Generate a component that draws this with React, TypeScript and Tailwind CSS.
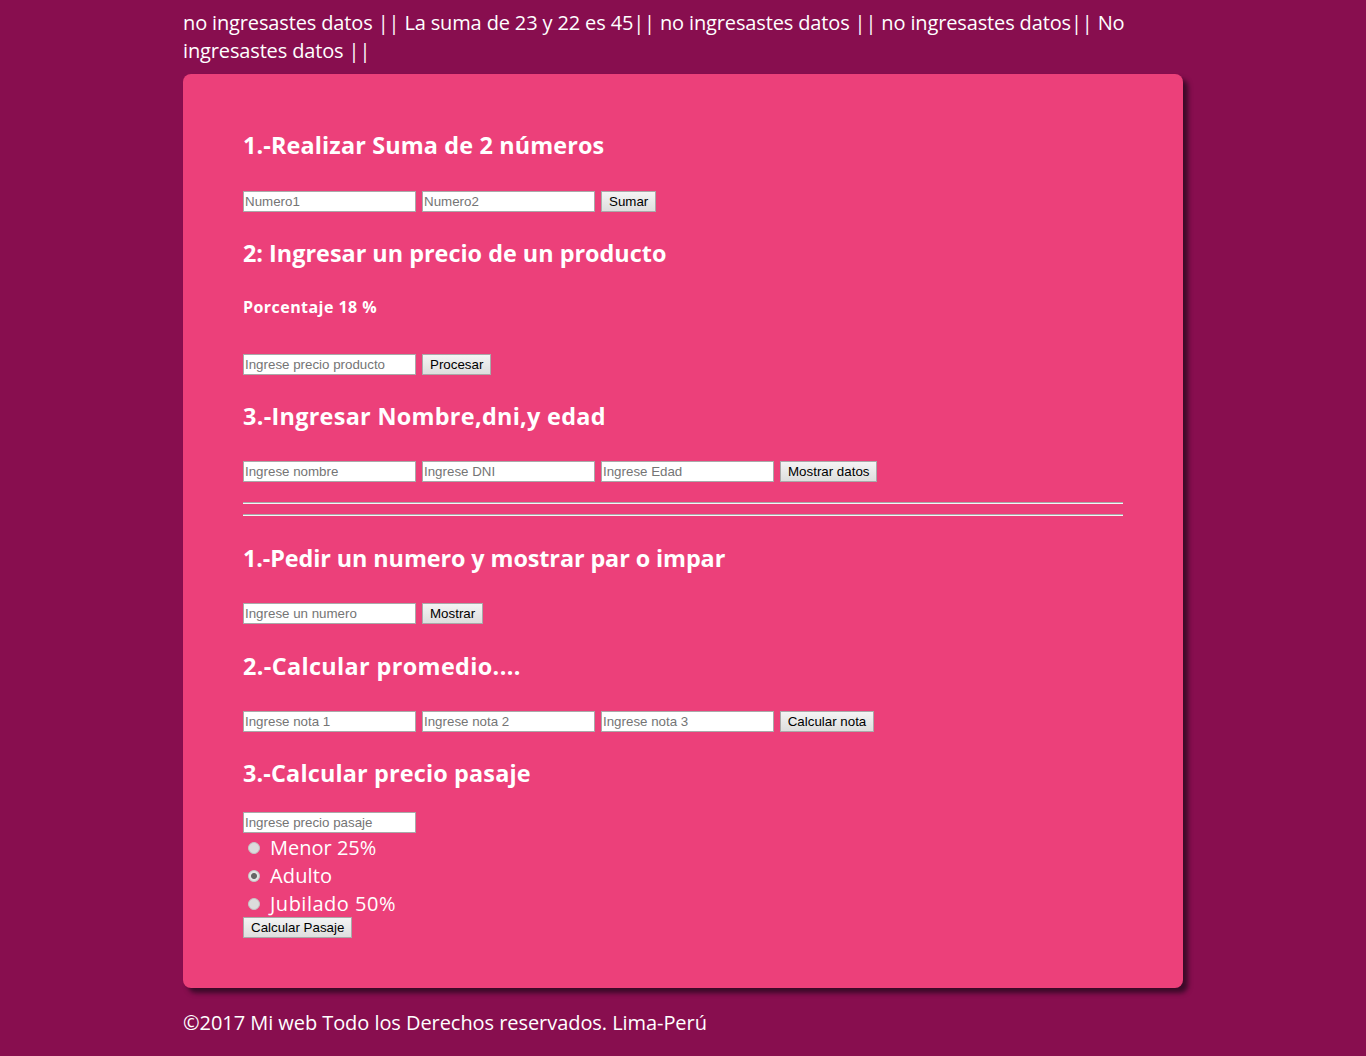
const font = "font-['Comic_Sans_MS','Open_Sans',sans-serif]";

function Heading({ children, className = "" }: { children: React.ReactNode; className?: string }) {
  return <h3 className={`text-[23.4px] leading-[33px] font-bold text-white ${className}`}>{children}</h3>;
}

function Field({ placeholder }: { placeholder: string }) {
  return (
    <input
      placeholder={placeholder}
      className="w-[173px] h-[21px] border border-[#a9a9a9] bg-white px-[1px] text-[13.33px] leading-[15px] text-black placeholder:text-[#757575] font-['Liberation_Sans',sans-serif] outline-none"
    />
  );
}

function Btn({ children, className = "" }: { children: React.ReactNode; className?: string }) {
  return (
    <button className={`h-[21px] whitespace-nowrap border border-[#a9a9a9] bg-gradient-to-b from-[#f4f4f4] to-[#dedede] px-[7px] text-[13.33px] leading-[15px] text-black font-['Liberation_Sans',sans-serif] ${className}`}>
      {children}
    </button>
  );
}

function Row({ children, className = "" }: { children: React.ReactNode; className?: string }) {
  return <div className={`flex gap-[6px] ${className}`}>{children}</div>;
}

function Radio({ label, checked = false, className = "" }: { label: string; checked?: boolean; className?: string }) {
  return (
    <label className={`flex h-[28px] items-center text-[20px] leading-[28px] text-white ${className}`}>
      <input
        type="radio"
        name="tipo"
        defaultChecked={checked}
        className="ml-[5px] mr-[10px] size-[12px] appearance-none rounded-full border border-[#c4c4c4] bg-[#dcdcdc] checked:bg-[radial-gradient(circle,#666666_0,#666666_2.5px,#e4e4e4_3.5px)]"
      />
      {label}
    </label>
  );
}

export default function App() {
  return (
    <div className={`min-h-[1056px] bg-[#880e4f] ${font}`}>
      <div className="mx-auto w-[1000px]">
        <p className="pt-[9px] text-[20px] leading-[28px] tracking-[-0.14px] text-white">
          no ingresastes datos || La suma de 23 y 22 es 45|| no ingresastes datos || no ingresastes datos|| No ingresastes datos ||
        </p>
        <main className="mt-[9px] h-[914px] rounded-lg bg-[#ec407a] px-[60px] pt-[55px] shadow-[5px_5px_5px_#3a0a28]">
          <Heading className="tracking-[0.14px]">1.-Realizar Suma de 2 números</Heading>
          <Row className="mt-[29px]">
            <Field placeholder="Numero1" />
            <Field placeholder="Numero2" />
            <Btn>Sumar</Btn>
          </Row>

          <Heading className="mt-[25px]">2: Ingresar un precio de un producto</Heading>
          <h4 className="mt-[25px] text-[16px] leading-[24px] tracking-[0.45px] font-bold text-white">Porcentaje 18 %</h4>
          <Row className="mt-[35px]">
            <Field placeholder="Ingrese precio producto" />
            <Btn>Procesar</Btn>
          </Row>

          <Heading className="mt-[25px] tracking-[0.3px]">3.-Ingresar Nombre,dni,y edad</Heading>
          <Row className="mt-[28px]">
            <Field placeholder="Ingrese nombre" />
            <Field placeholder="Ingrese DNI" />
            <Field placeholder="Ingrese Edad" />
            <Btn>Mostrar datos</Btn>
          </Row>

          <hr className="mt-[20px] h-[2px] border-0 border-t border-b border-t-[#a9a9a9] border-b-[#f5f5f5]" />
          <hr className="mt-[10px] h-[2px] border-0 border-t border-b border-t-[#a9a9a9] border-b-[#f5f5f5]" />

          <Heading className="mt-[26px] tracking-[-0.1px]">1.-Pedir un numero y mostrar par o impar</Heading>
          <Row className="mt-[28px]">
            <Field placeholder="Ingrese un numero" />
            <Btn>Mostrar</Btn>
          </Row>

          <Heading className="mt-[26px] tracking-[0.37px]">2.-Calcular promedio....</Heading>
          <Row className="mt-[28px]">
            <Field placeholder="Ingrese nota 1" />
            <Field placeholder="Ingrese nota 2" />
            <Field placeholder="Ingrese nota 3" />
            <Btn className="w-[94px] !px-0">Calcular nota</Btn>
          </Row>

          <Heading className="mt-[25px] tracking-[0.16px]">3.-Calcular precio pasaje</Heading>
          <Row className="mt-[22px]">
            <Field placeholder="Ingrese precio pasaje" />
          </Row>
          <div className="mt-[1px]">
            <Radio label="Menor 25%" />
            <Radio label="Adulto" checked className="tracking-[0.15px]" />
            <Radio label="Jubilado 50%" className="tracking-[0.5px]" />
          </div>
          <Row className="-mt-[1px]">
            <Btn>Calcular Pasaje</Btn>
          </Row>
        </main>
        <footer className="mt-[21px] text-[20px] leading-[28px] tracking-[-0.06px] text-white">©2017 Mi web Todo los Derechos reservados. Lima-Perú</footer>
      </div>
    </div>
  );
}
